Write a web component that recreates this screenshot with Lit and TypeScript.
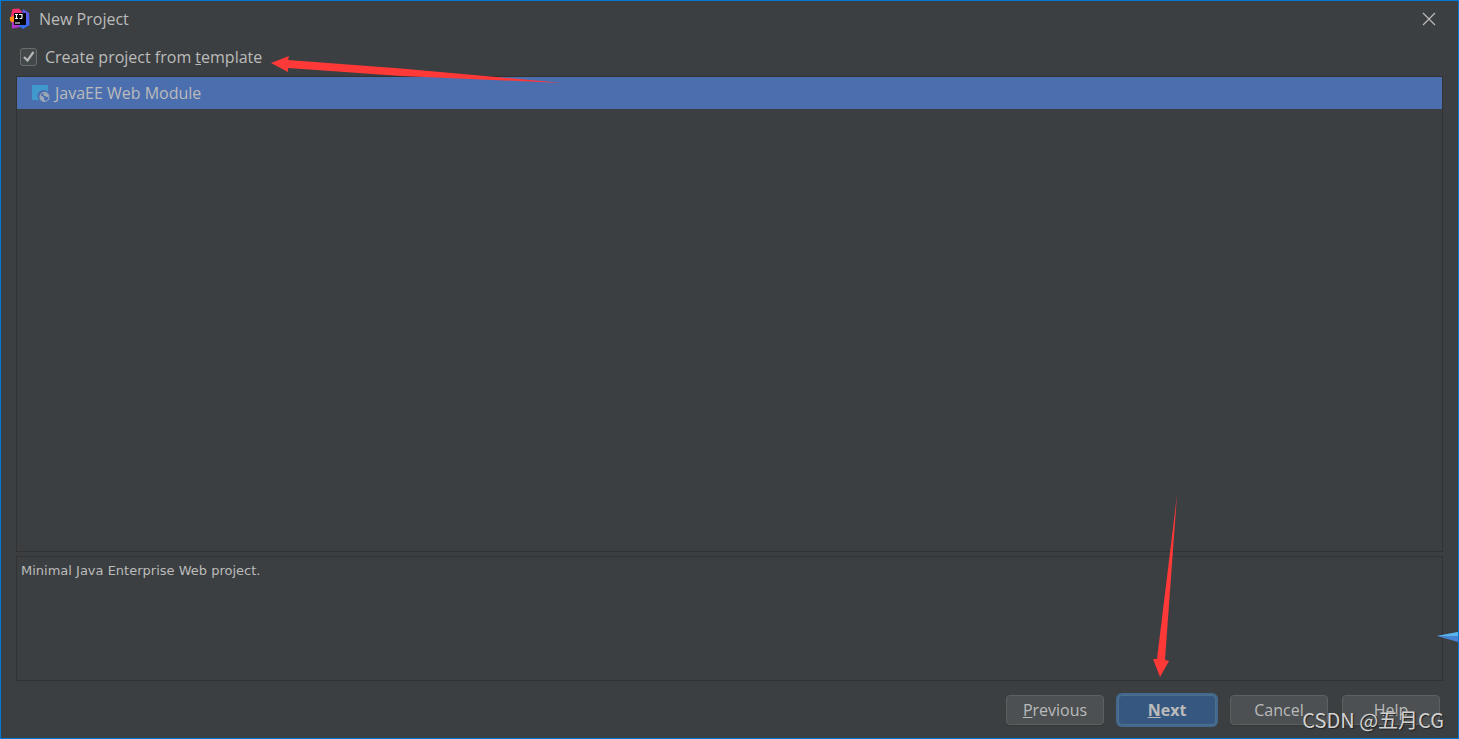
import { LitElement, html, css } from "lit";
import { customElement, state } from "lit/decorators.js";

@customElement("app-root")
export class AppRoot extends LitElement {
  @state() private fromTemplate = true;

  static styles = css`
    :host {
      display: block;
      height: 100vh;
      font-family: "Open Sans", "Noto Sans", "Noto Sans CJK SC", sans-serif;
      font-size: 16px;
      line-height: 22px;
      color: #bbbbbb;
    }
    * {
      box-sizing: border-box;
    }
    .dialog {
      position: relative;
      display: flex;
      flex-direction: column;
      height: 100%;
      overflow: hidden;
      background: #3c3f41;
      border: 1px solid #0078d7;
    }
    .titlebar {
      display: flex;
      align-items: center;
      height: 36px;
      padding: 0 20px 0 8px;
    }
    .logo {
      width: 22px;
      height: 22px;
      margin-right: 8px;
    }
    .title {
      flex: 1;
      margin: 0;
      font-size: 16px;
      font-weight: 400;
    }
    .close {
      display: flex;
      align-items: center;
      justify-content: center;
      width: 18px;
      height: 18px;
      padding: 0;
      border: 0;
      background: none;
    }
    .option {
      display: flex;
      align-items: center;
      align-self: flex-start;
      gap: 8px;
      height: 39px;
      padding-left: 19px;
    }
    .tick {
      display: grid;
      width: 17px;
      height: 18px;
    }
    .tick > * {
      grid-area: 1 / 1;
      width: 100%;
      height: 100%;
      margin: 0;
    }
    .box {
      appearance: none;
      background: #43494a;
      border: 1px solid #6b6b6b;
      border-radius: 3px;
    }
    .mark {
      pointer-events: none;
      visibility: hidden;
    }
    .box:checked + .mark {
      visibility: visible;
    }
    .panels {
      flex: 1;
      display: flex;
      flex-direction: column;
      gap: 4px;
      padding: 0 15px;
    }
    .list {
      flex: 1;
      margin: 0;
      padding: 0;
      list-style: none;
      border: 1px solid #323232;
    }
    .item {
      display: flex;
      align-items: center;
      gap: 5px;
      height: 32px;
      padding-left: 14px;
      background: #4b6eaf;
    }
    .description {
      height: 125px;
      margin: 0;
      padding: 4px;
      border: 1px solid #323232;
      font-family: "DejaVu Sans", sans-serif;
      font-size: 13px;
      line-height: 20px;
    }
    .footer {
      display: flex;
      align-items: center;
      justify-content: flex-end;
      gap: 14px;
      height: 57px;
      padding-right: 18px;
    }
    .button {
      width: 98px;
      height: 30px;
      padding: 0;
      font: inherit;
      color: #bbbbbb;
      background: #4c5052;
      border: 1px solid #5e6060;
      border-radius: 4px;
      box-shadow: 0 1px 1px #35383a;
    }
    .primary {
      font-weight: 700;
      background: #365880;
      border-color: #4c708c;
      box-shadow: 0 0 0 2px #43698e;
    }
    .arrow,
    .blade,
    .watermark {
      position: absolute;
      pointer-events: none;
    }
    .arrow {
      fill: #ff3838;
    }
    .to-option {
      left: 270px;
      top: 54px;
    }
    .to-next {
      right: 280px;
      bottom: 60px;
    }
    .blade {
      right: 0;
      bottom: 95px;
    }
    .watermark {
      right: 14px;
      bottom: 5px;
      font-family: "Noto Sans CJK SC", sans-serif;
      font-size: 20px;
      line-height: 26px;
      color: #d2d2d2;
      text-shadow: 1px 1px 1px #222222;
    }
  `;

  private toggle(e: Event) {
    this.fromTemplate = (e.target as HTMLInputElement).checked;
  }

  render() {
    return html`
      <main class="dialog">
        <header class="titlebar">
          <svg class="logo" viewBox="0 0 22 22" aria-hidden="true">
            <defs>
              <linearGradient id="warm" x1="0" y1="0" x2="1" y2="1">
                <stop offset="0" stop-color="#ff3158" />
                <stop offset="1" stop-color="#f0309a" />
              </linearGradient>
              <linearGradient id="cool" x1="0" y1="0" x2="0" y2="1">
                <stop offset="0" stop-color="#6a55e8" />
                <stop offset="1" stop-color="#2f6df0" />
              </linearGradient>
            </defs>
            <path d="M3.500 1 10 .5 13 4 9 12H3L2 8Z" fill="url(#warm)" />
            <path d="M1 9 5 8v6L3 15 .8 12Z" fill="#ff8a18" />
            <path d="m3 14 6 1 3 4-9 1.500Z" fill="#b134ce" />
            <path d="m14 1 6 4 .5 12-6.500 4-4-3 3-12Z" fill="url(#cool)" />
            <path d="M5 5h12v12H5Z" fill="#050507" />
            <path
              d="M6 6.500h3M7.500 6.500v4M6 10.500h3M10 6.500h3v3q0 1-1 1h-1.500M6 15h5"
              fill="none"
              stroke="#fff"
              stroke-width="1.100"
            />
          </svg>
          <h1 class="title">New Project</h1>
          <button class="close" aria-label="Close">
            <svg width="14" height="14" viewBox="0 0 14 14">
              <path d="m1 1 12 12M13 1 1 13" stroke="#bbb" stroke-width="1.200" />
            </svg>
          </button>
        </header>

        <label class="option">
          <span class="tick">
            <input class="box" type="checkbox" .checked=${this.fromTemplate} @change=${this.toggle} />
            <svg class="mark" viewBox="0 0 17 18" aria-hidden="true">
              <path d="m4 9 3.500 3.500L13.500 4" fill="none" stroke="#b5b5b5" stroke-width="2.200" />
            </svg>
          </span>
          <span>Create project from <u>t</u>emplate</span>
        </label>

        <section class="panels">
          <ul class="list">
            <li class="item">
              <svg width="19" height="20" viewBox="0 0 19 20" aria-hidden="true">
                <path d="M1 2h16v7a6 6 0 0 0-9 8H1Z" fill="#4098cc" />
                <circle cx="13.500" cy="14" r="4.500" fill="#4b6eaf" stroke="#a3adb8" stroke-width="1.100" />
                <path d="M9.500 12 13 14.500v2l1.500 2-3-.500-2-3ZM12.500 10l3.500.500 1.500 2-1.500 2-1.500-1.500-2-.500Z" fill="#a3adb8" />
              </svg>
              <span>JavaEE Web Module</span>
            </li>
          </ul>
          <p class="description">Minimal Java Enterprise Web project.</p>
        </section>

        <footer class="footer">
          <button class="button"><u>P</u>revious</button>
          <button class="button primary"><u>N</u>ext</button>
          <button class="button">Cancel</button>
          <button class="button">Help</button>
        </footer>

        <svg class="arrow to-option" width="292" height="30" viewBox="0 0 292 30" aria-hidden="true">
          <path d="M0 8 18 1 17 5 130 13.500 292 28 130 21 17 13v4Z" />
        </svg>
        <svg class="arrow to-next" width="26" height="184" viewBox="0 0 26 184" aria-hidden="true">
          <path d="M25 1 13 166l4 1L8 183 1 165h4Z" />
        </svg>
        <svg class="blade" width="21" height="11" viewBox="0 0 21 11" aria-hidden="true">
          <path d="M0 4 21 0v10Z" fill="#4683d2" />
          <path d="M0 4 21 0v4Z" fill="#58b7e8" />
        </svg>
        <span class="watermark">CSDN @五月CG</span>
      </main>
    `;
  }
}
